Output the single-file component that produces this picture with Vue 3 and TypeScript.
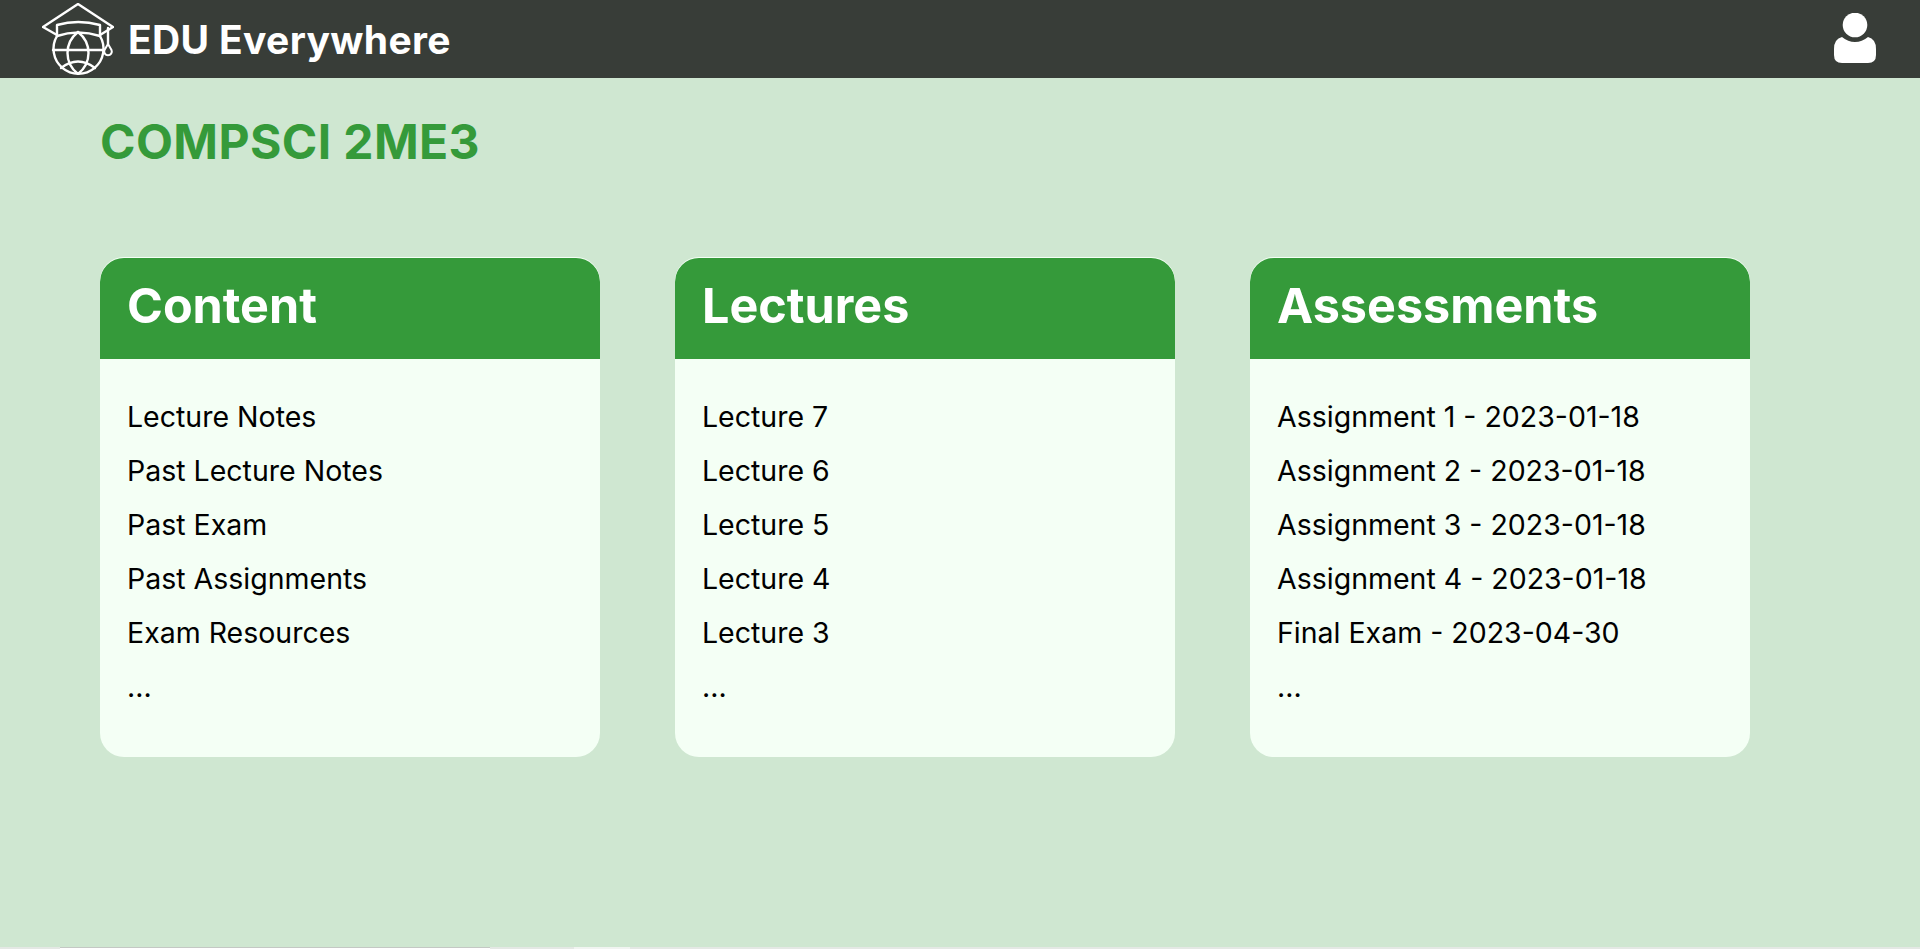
<template>
  <div class="page">
    <header class="nav">
      <div class="brand">
        <svg class="logo" viewBox="0 0 72 72" fill="none" stroke="#fff" stroke-width="2.4" stroke-linejoin="round" stroke-linecap="round">
          <path d="M15 32 L1 24 L36 1 L71 24 L58 32" />
          <path d="M15 33 V22 Q36 16 58 22 V33" />
          <path d="M15 33 Q36 26 58 33" />
          <path d="M15 33 A25 25 0 1 0 58 33" />
          <path d="M11 47 H61" />
          <path d="M36 29 C22 40 22 60 36 71 C50 60 50 40 36 29" />
          <path d="M19 65 Q36 52 53 65" />
          <path d="M66 25 V41" />
          <path d="M66 41 L62.5 47 A3.8 3.8 0 1 0 69.5 47 Z" stroke-width="2" />
        </svg>
        <span class="brand-name">EDU Everywhere</span>
      </div>
      <svg class="user" viewBox="0 0 42 50" fill="#fff">
        <circle cx="21" cy="12" r="12.3" />
        <path d="M8 24 Q14 29 21 29 Q28 29 34 24 Q42 26 42 36 V42 Q42 50 34 50 H8 Q0 50 0 42 V36 Q0 26 8 24 Z" />
      </svg>
    </header>

    <main class="main">
      <h1 class="course">{{ courseName }}</h1>
      <section class="cards">
        <article v-for="card in cards" :key="card.title" class="card">
          <h2 class="card-title">{{ card.title }}</h2>
          <ul class="card-list">
            <li v-for="item in card.items" :key="item">{{ item }}</li>
          </ul>
        </article>
      </section>
    </main>

    <div class="peek">
      <div class="peek-input"></div>
      <div class="peek-tab"></div>
    </div>
  </div>
</template>

<script setup lang="ts">
interface Card {
  title: string
  items: string[]
}

const courseName = 'COMPSCI 2ME3'

const cards: Card[] = [
  {
    title: 'Content',
    items: ['Lecture Notes', 'Past Lecture Notes', 'Past Exam', 'Past Assignments', 'Exam Resources', '...'],
  },
  {
    title: 'Lectures',
    items: ['Lecture 7', 'Lecture 6', 'Lecture 5', 'Lecture 4', 'Lecture 3', '...'],
  },
  {
    title: 'Assessments',
    items: [
      'Assignment 1 - 2023-01-18',
      'Assignment 2 - 2023-01-18',
      'Assignment 3 - 2023-01-18',
      'Assignment 4 - 2023-01-18',
      'Final Exam - 2023-04-30',
      '...',
    ],
  },
]
</script>

<style>
html,
body {
  margin: 0;
  background: #cfe7d1;
}
</style>

<style scoped>
.page {
  height: 949px;
  overflow: hidden;
  position: relative;
  background: #cfe7d1;
  font-family: Inter, "Liberation Sans", sans-serif;
}

.nav {
  height: 78px;
  background: #383d38;
  display: flex;
  align-items: center;
  justify-content: space-between;
  padding: 0 44px 0 42px;
}

.brand {
  display: flex;
  align-items: center;
  gap: 14px;
}

.logo {
  width: 72px;
  height: 72px;
}

.brand-name {
  color: #fff;
  font-size: 39px;
  font-weight: 700;
  letter-spacing: 0.35px;
}

.user {
  width: 42px;
  height: 50px;
  margin-bottom: 2px;
}

.main {
  padding: 32px 0 0 100px;
}

.course {
  margin: 0;
  color: #359a3a;
  font-size: 48px;
  font-weight: 700;
  line-height: 64px;
  letter-spacing: 0.4px;
}

.cards {
  display: flex;
  gap: 75px;
  margin-top: 83px;
}

.card {
  width: 500px;
  height: 500px;
  border-radius: 24px;
  overflow: hidden;
  background: #f4fff5;
}

.card-title {
  margin: 1px 0 0;
  height: 101px;
  padding-left: 27px;
  border-radius: 24px 24px 0 0;
  background: #359a3a;
  color: #fff;
  font-size: 48.5px;
  font-weight: 700;
  line-height: 95px;
}

.card-list {
  margin: 0;
  padding: 31px 0 0 27px;
  list-style: none;
  color: #000;
  font-size: 28.5px;
  line-height: 54px;
}

.peek {
  position: absolute;
  left: 0;
  right: 0;
  bottom: 0;
  height: 2px;
  background: #e4e8e4;
}

.peek-input {
  position: absolute;
  left: 60px;
  width: 430px;
  height: 1px;
  top: 1px;
  background: #fff;
  box-shadow: 0 -1px 0 #c4c8c4;
}

.peek-tab {
  position: absolute;
  left: 574px;
  width: 56px;
  height: 2px;
  background: #f1f4f1;
}
</style>
